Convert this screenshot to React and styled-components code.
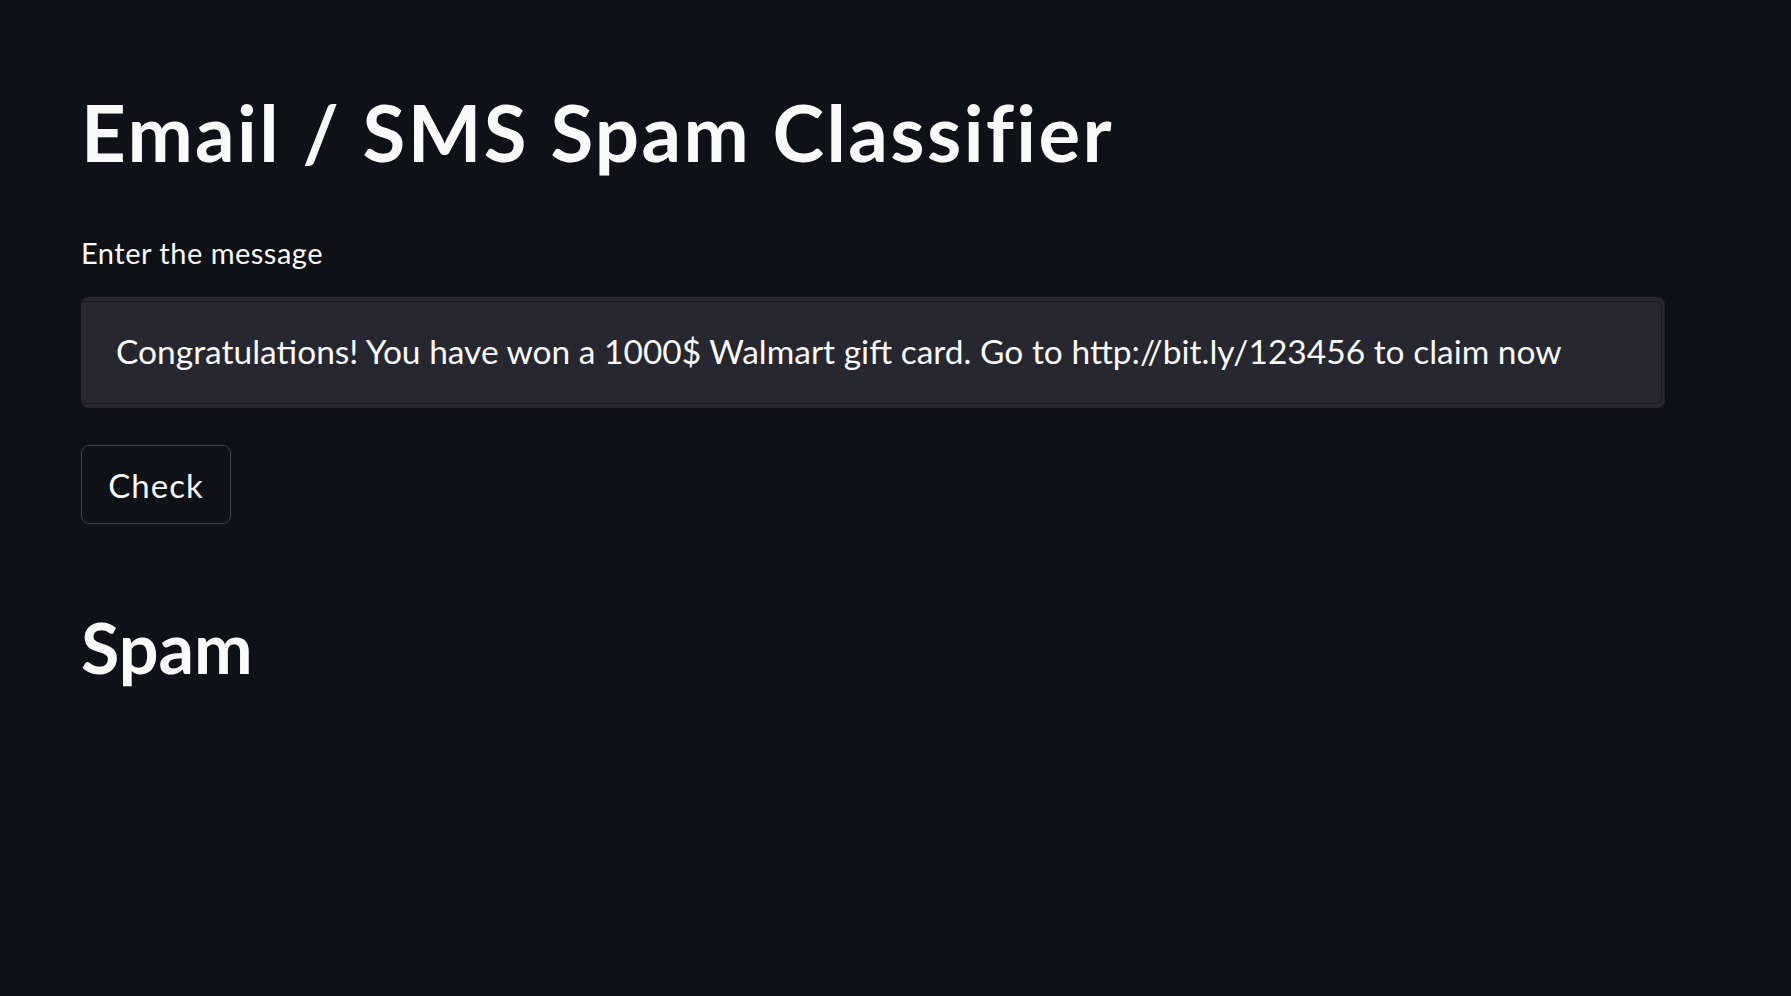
import React from "react";
import styled, { createGlobalStyle } from "styled-components";

const Global = createGlobalStyle`
  html, body { margin: 0; padding: 0; background: #0e1117; }
  body { font-family: Lato, "Liberation Sans", sans-serif; color: #fafafa; }
  #root { min-height: 996px; background: #0e1117; }
`;

const Main = styled.main`
  display: flex;
  flex-direction: column;
  align-items: flex-start;
  padding: 86px 126px 0 81px;
`;

const Title = styled.h1`
  margin: 0 0 56px 0;
  font-size: 78px;
  font-weight: 700;
  line-height: 1.2;
  letter-spacing: 2.4px;
`;

const Label = styled.label`
  font-size: 29px;
  line-height: 1.2;
  letter-spacing: 0.5px;
  margin-bottom: 27px;
`;

const InputShell = styled.div`
  box-sizing: border-box;
  align-self: stretch;
  height: 111px;
  padding: 4px 3px 4px 0;
  background: #262730;
  border-radius: 8px;
`;

const InputArea = styled.div`
  box-sizing: border-box;
  height: 100%;
  padding: 29px 0 0 35px;
  border-top: 1px solid #17181f;
  border-bottom: 1px solid #17181f;
  border-right: 1px solid #17181f;
  border-radius: 0 6px 6px 0;
  font-size: 33.5px;
  line-height: 1.2;
  white-space: nowrap;
`;

const Button = styled.button`
  box-sizing: border-box;
  margin-top: 37px;
  width: 150px;
  height: 79px;
  background: #0e1117;
  color: #fafafa;
  border: 1px solid #3f4149;
  border-radius: 8px;
  font-family: Lato, "Liberation Sans", sans-serif;
  font-size: 33px;
  letter-spacing: 1px;
  padding: 0;
  cursor: pointer;
`;

const Result = styled.h2`
  margin: 81px 0 0 0;
  font-size: 70px;
  font-weight: 700;
  line-height: 1.2;
`;

export default function App() {
  return (
    <>
      <Global />
      <Main>
        <Title>Email / SMS Spam Classifier</Title>
        <Label>Enter the message</Label>
        <InputShell>
          <InputArea>
            Congratulations! You have won a 1000$ Walmart gift card. Go to http://bit.ly/123456 to claim now
          </InputArea>
        </InputShell>
        <Button>Check</Button>
        <Result>Spam</Result>
      </Main>
    </>
  );
}
